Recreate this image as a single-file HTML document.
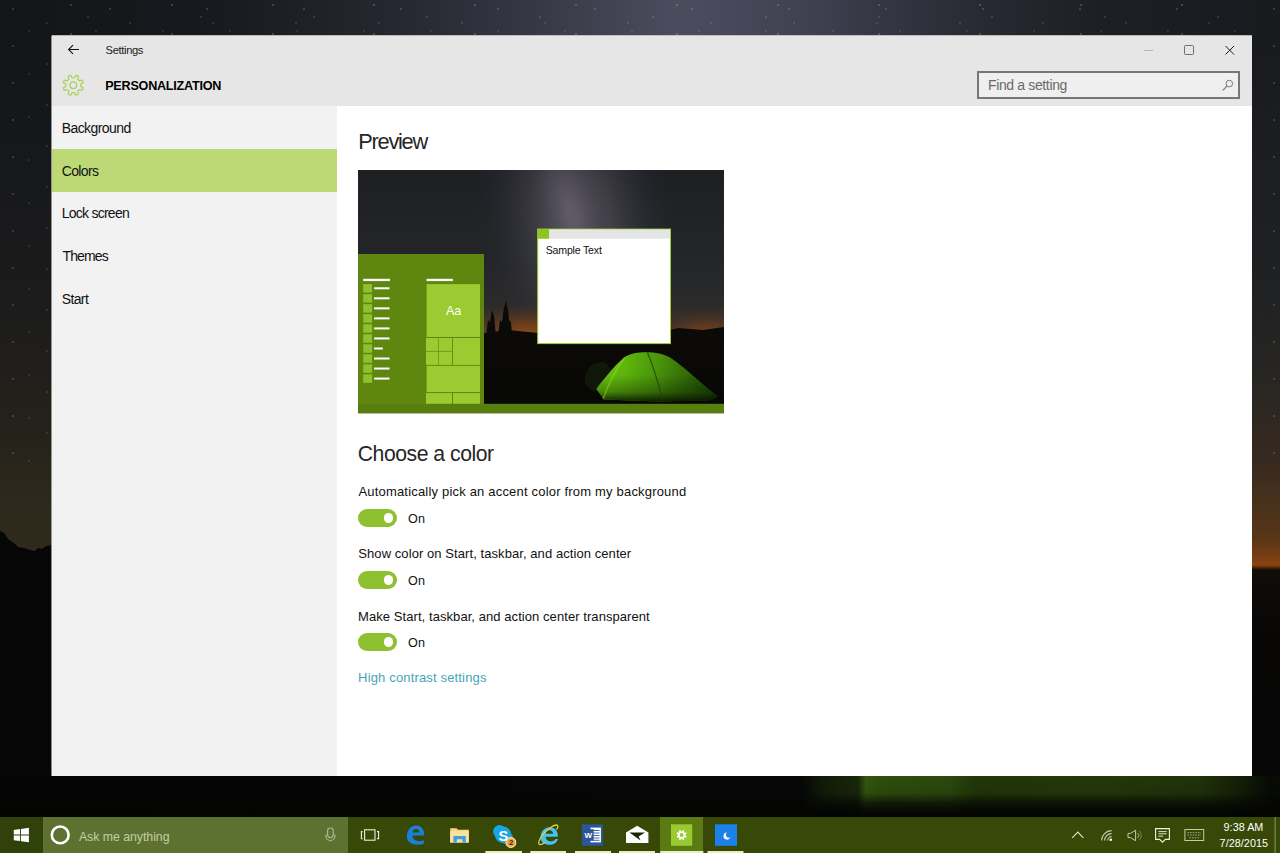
<!DOCTYPE html>
<html><head><meta charset="utf-8"><title>Settings</title>
<style>
*{box-sizing:border-box;margin:0;padding:0}
html,body{width:1280px;height:853px;overflow:hidden}
body{font-family:"Liberation Sans",sans-serif;background:#111214;position:relative;color:#000}
.a{position:absolute}
.t{position:absolute;line-height:1;white-space:nowrap}
svg{position:absolute;overflow:visible}
#desk{position:absolute;left:0;top:0;width:1280px;height:853px;
 background:linear-gradient(to right,#141518 0,#18191e 200px,#262730 400px,#3b3b49 560px,#4d4c5f 680px,#414152 800px,#2b2d37 950px,#1d1f25 1100px,#181a1e 1280px)}
#stars{position:absolute;left:0;top:0;width:1280px;height:470px;
 background:
  radial-gradient(1px 1px at 13px 9px,rgba(255,255,255,.5),rgba(255,255,255,0) 100%),
  radial-gradient(1px 1px at 47px 23px,rgba(255,255,255,.35),rgba(255,255,255,0) 100%),
  radial-gradient(1.2px 1.2px at 71px 5px,rgba(255,235,190,.45),rgba(255,255,255,0) 100%),
  radial-gradient(1px 1px at 29px 31px,rgba(255,255,255,.3),rgba(255,255,255,0) 100%),
  radial-gradient(1px 1px at 88px 17px,rgba(255,255,255,.4),rgba(255,255,255,0) 100%);
 background-size:97px 37px,83px 41px,101px 29px,67px 43px,113px 31px}
#lstrip{position:absolute;left:0;top:35px;width:52px;height:782px;background:linear-gradient(to bottom,#141518 0,#17181a 120px,#1b1b1c 260px,#25221b 400px,#2d291c 470px,#2f2a1b 520px)}
#rstrip{position:absolute;left:1252px;top:35px;width:28px;height:782px;background:linear-gradient(to bottom,#181a1e 0,#1b1d20 100px,#202123 260px,#282623 345px,#36291f 425px,#47311c 465px,#5a3616 505px,#793e12 522px,#8c4510 530px,#100c08 535px,#080706 600px,#060606 100%)}
#bstrip{position:absolute;left:0;top:776px;width:1280px;height:41px;background:
 linear-gradient(to bottom,rgba(4,5,3,0) 0,rgba(4,5,3,.1) 17px,rgba(4,5,3,.7) 27px,rgba(4,5,3,.95) 35px,rgba(4,5,3,1) 41px),
 linear-gradient(to right,#050505 0,#060606 800px,#121d08 825px,#18280a 858px,#35580f 866px,#2f4e0e 880px,#2c490d 950px,#223609 975px,#24390b 1100px,#203309 1200px,#141f07 1240px,#080a05 1270px)}
#win{position:absolute;left:52px;top:36px;width:1200px;height:740px;background:#fff;box-shadow:-1px 0 0 rgba(225,228,215,.5),0 -1px 0 rgba(235,238,225,.7),-1px -1px 0 rgba(120,125,110,.4)}
#hdr{position:absolute;left:0;top:0;width:1200px;height:70px;background:#e6e6e6}
#side{position:absolute;left:0;top:70px;width:285px;height:670px;background:#f2f2f2}
#sel{position:absolute;left:0;top:43px;width:285px;height:43px;background:#bcd976}
#search{position:absolute;left:925px;top:35px;width:263px;height:28px;border:2px solid #777;background:#efefef}
.tog{position:absolute;left:358px;width:39px;height:18px;border-radius:9px;background:#8ec02f}
.tog i{position:absolute;left:25.8px;top:4.4px;width:9.2px;height:9.2px;border-radius:4.6px;background:#fff}
#tb{position:absolute;left:0;top:817px;width:1280px;height:36px;background:#384806}
</style></head><body>
<div id="desk"></div><div id="lstrip"></div><div id="rstrip"></div><div id="stars"></div>
<svg style="left:0;top:500px" width="53" height="320" viewBox="0 500 53 320"><path d="M0 531L4 533L9 540L14 543L18 547L24 548L30 550L35 551L38 548L42 549L46 546L53 545V820H0Z" fill="#060606"/></svg>
<div id="bstrip"></div>
<div id="win">
 <div id="hdr"></div>
 <div id="side"><div id="sel"></div></div>
 <div id="search"></div>
</div>
<!-- title bar icons (page coords) -->
<svg style="left:0;top:0" width="1280" height="853" viewBox="0 0 1280 853" fill="none">
 <!-- back arrow -->
 <path d="M79 49.5H68.6M73 45.2L68.6 49.5L73 53.8" stroke="#111" stroke-width="1.1"/>
 <!-- minimize -->
 <path d="M1144 50.5H1153" stroke="#b5b5b5" stroke-width="1"/>
 <!-- maximize -->
 <rect x="1184.5" y="45.5" width="9" height="9" rx="1" stroke="#5a5a5a" stroke-width=".85"/>
 <!-- close -->
 <path d="M1225.5 46L1234 54.5M1234 46L1225.5 54.5" stroke="#111" stroke-width=".95"/>
 <!-- search icon -->
 <circle cx="1229.3" cy="83.6" r="3.3" stroke="#777" stroke-width="1"/>
 <path d="M1227 86L1222.8 90.3" stroke="#777" stroke-width="1.1"/>
 <!-- gear -->
 <g transform="translate(73.3 85.2)" stroke="#a8d150" stroke-width="1.15">
  <circle r="3.3"/>
  <path d="M7.49 1.31L9.98 2.56L8.87 5.24L6.22 4.37L4.37 6.22L5.24 8.87L2.56 9.98L1.31 7.49L-1.31 7.49L-2.56 9.98L-5.24 8.87L-4.37 6.22L-6.22 4.37L-8.87 5.24L-9.98 2.56L-7.49 1.31L-7.49 -1.31L-9.98 -2.56L-8.87 -5.24L-6.22 -4.37L-4.37 -6.22L-5.24 -8.87L-2.56 -9.98L-1.31 -7.49L1.31 -7.49L2.56 -9.98L5.24 -8.87L4.37 -6.22L6.22 -4.37L8.87 -5.24L9.98 -2.56L7.49 -1.31Z" stroke-linejoin="round"/>
 </g>
</svg>
<div class="tog" style="top:509px"><i></i></div>
<div class="tog" style="top:571px"><i></i></div>
<div class="tog" style="top:633px"><i></i></div>
<svg style="left:358px;top:170px" width="366" height="243.4" viewBox="0 0 366 243.4">
<defs>
<linearGradient id="psky" x1="0" y1="0" x2="0" y2="243.4" gradientUnits="userSpaceOnUse">
 <stop offset="0" stop-color="#1d1f23"/><stop offset="0.4" stop-color="#24262a"/><stop offset="0.55" stop-color="#2b2a2b"/><stop offset="0.64" stop-color="#3a3029"/><stop offset="0.672" stop-color="#43301f"/><stop offset="0.68" stop-color="#0b0a08"/><stop offset="1" stop-color="#070706"/>
</linearGradient>
<radialGradient id="pmw" cx="0.5" cy="0.5" r="0.5"><stop offset="0" stop-color="#6d6775" stop-opacity=".9"/><stop offset="0.35" stop-color="#5a5662" stop-opacity=".65"/><stop offset="0.7" stop-color="#403e48" stop-opacity=".3"/><stop offset="1" stop-color="#2a2a30" stop-opacity="0"/></radialGradient>
<radialGradient id="pgl" cx="0.5" cy="0.5" r="0.5"><stop offset="0" stop-color="#9a4f14" stop-opacity=".95"/><stop offset="0.4" stop-color="#7a411a" stop-opacity=".7"/><stop offset="1" stop-color="#3a2c22" stop-opacity="0"/></radialGradient>
<linearGradient id="ptent" x1="245" y1="195" x2="360" y2="222" gradientUnits="userSpaceOnUse"><stop offset="0" stop-color="#6cc40e"/><stop offset="0.22" stop-color="#5cb00c"/><stop offset="0.45" stop-color="#4a950a"/><stop offset="0.7" stop-color="#336d07"/><stop offset="1" stop-color="#1a3f04"/></linearGradient>
<linearGradient id="ptentf" x1="0" y1="182" x2="0" y2="232" gradientUnits="userSpaceOnUse"><stop offset="0.45" stop-color="#0a1a02" stop-opacity="0"/><stop offset="0.8" stop-color="#0a1a02" stop-opacity=".35"/><stop offset="1" stop-color="#050c02" stop-opacity=".9"/></linearGradient>
<clipPath id="pclip"><rect x="0" y="0" width="366" height="243.4"/></clipPath>
<clipPath id="phz"><rect x="0" y="0" width="366" height="165"/></clipPath>
</defs>
<g clip-path="url(#pclip)">
<rect width="366" height="243.4" fill="url(#psky)"/>
<g clip-path="url(#phz)"><ellipse cx="218" cy="50" rx="100" ry="175" fill="url(#pmw)" transform="rotate(-10 218 50)" opacity=".85"/></g>
<ellipse cx="210" cy="38" rx="40" ry="100" fill="url(#pmw)" transform="rotate(-12 210 38)" opacity=".55"/>
<g clip-path="url(#phz)"><ellipse cx="170" cy="166" rx="85" ry="34" fill="url(#pgl)"/><ellipse cx="350" cy="166" rx="70" ry="30" fill="url(#pgl)" opacity=".7"/></g>
<path d="M120 164L150 160L180 163L300 163L320 158L345 160L366 157L366 168L120 168Z" fill="#0b0a08"/>
<path d="M128 166L130 150L132 152L134 140L136 146L138 166Z M140 166L142 150L144 152L146 138L148 131L150 140L151 150L153 152L154 166Z" fill="#0a0a08"/>
<path d="M227 214C226 206 229 199 233 196C236 192 240 194 243 192C247 191 251 195 253 200L246 212L236 222Z" fill="#15240c" opacity=".55"/>
<path d="M238.3 219C246 209 256 196 266 187.5C272 183.5 280 182.3 288 182.3C297 182.3 306 184 312 187.5C322 194 332 203 340 210C348 217 355 222.5 360 226.5L352 230.5L300 231.5L246 229.5Z" fill="url(#ptent)"/>
<path d="M238.3 219C246 209 256 196 266 187.5C272 183.5 280 182.3 288 182.3C297 182.3 306 184 312 187.5C322 194 332 203 340 210C348 217 355 222.5 360 226.5L352 230.5L300 231.5L246 229.5Z" fill="url(#ptentf)"/>
<path d="M266.5 188C259 198 251 212 245 229" stroke="#9be02a" stroke-opacity=".45" stroke-width="1.6" fill="none"/>
<path d="M289.5 182.6C295 196 300 212 304.5 229" stroke="#20480a" stroke-opacity=".8" stroke-width="1.3" fill="none"/>
<rect x="0" y="84" width="126" height="150" fill="#5f860f"/>
<rect x="0" y="233.8" width="366" height="9.6" fill="#587e0e"/>
<rect x="5.2" y="108.8" width="26.8" height="2.3" fill="#fff"/>
<rect x="68.5" y="108.8" width="26.4" height="2.3" fill="#fff"/>
<rect x="5.2" y="114.10" width="8.9" height="8.5" fill="#8fc02f"/>
<rect x="16.1" y="117.30" width="15.4" height="2" fill="#fff"/>
<rect x="5.2" y="124.13" width="8.9" height="8.5" fill="#8fc02f"/>
<rect x="16.1" y="127.33" width="15.4" height="2" fill="#fff"/>
<rect x="5.2" y="134.16" width="8.9" height="8.5" fill="#8fc02f"/>
<rect x="16.1" y="137.36" width="15.4" height="2" fill="#fff"/>
<rect x="5.2" y="144.19" width="8.9" height="8.5" fill="#8fc02f"/>
<rect x="16.1" y="147.39" width="15.4" height="2" fill="#fff"/>
<rect x="5.2" y="154.22" width="8.9" height="8.5" fill="#8fc02f"/>
<rect x="16.1" y="157.42" width="15.4" height="2" fill="#fff"/>
<rect x="5.2" y="164.25" width="8.9" height="8.5" fill="#8fc02f"/>
<rect x="16.1" y="167.45" width="15.4" height="2" fill="#fff"/>
<rect x="5.2" y="174.28" width="8.9" height="8.5" fill="#8fc02f"/>
<rect x="16.1" y="177.48" width="8.7" height="2" fill="#fff"/>
<rect x="5.2" y="184.31" width="8.9" height="8.5" fill="#8fc02f"/>
<rect x="16.1" y="187.51" width="15.4" height="2" fill="#fff"/>
<rect x="5.2" y="194.34" width="8.9" height="8.5" fill="#8fc02f"/>
<rect x="16.1" y="197.54" width="15.4" height="2" fill="#fff"/>
<rect x="5.2" y="204.37" width="8.9" height="8.5" fill="#8fc02f"/>
<rect x="16.1" y="207.57" width="15.4" height="2" fill="#fff"/>
<rect x="68.6" y="114.1" width="53.4" height="52.9" fill="#9acb30"/>
<rect x="68" y="168" width="12.4" height="12.9" fill="#9acb30"/>
<rect x="81" y="168" width="13" height="12.9" fill="#9acb30"/>
<rect x="68" y="181.6" width="12.4" height="13.3" fill="#9acb30"/>
<rect x="81" y="181.6" width="13" height="13.3" fill="#9acb30"/>
<rect x="94.9" y="168" width="27.1" height="26.9" fill="#9acb30"/>
<rect x="68.6" y="195.8" width="53.4" height="26.3" fill="#9acb30"/>
<rect x="68" y="223.1" width="26" height="10.7" fill="#9acb30"/>
<rect x="95" y="223.1" width="27" height="10.7" fill="#9acb30"/>
<rect x="179.7" y="59.1" width="132.8" height="114.5" fill="#fff" stroke="#9acd32" stroke-width="1"/>
<rect x="180.2" y="59.6" width="131.8" height="9.1" fill="#e5e5e5"/>
<rect x="179.4" y="58.8" width="11.6" height="9.9" fill="#8fc320"/>
</g></svg>
<div id="tb"></div>
<div class="a" style="left:0;top:817px;width:43px;height:36px;background:#31410a"></div>
<div class="a" style="left:43px;top:817px;width:305.3px;height:36px;background:#5d7230"></div>
<div class="a" style="left:660.3px;top:817px;width:43.1px;height:36px;background:#5b7a12"></div>
<svg style="left:0;top:0" width="1280" height="853" viewBox="0 0 1280 853" fill="none">
<path d="M13.8 829.9L20 829V834.6H13.8Z M20.9 828.9L28.9 827.8V834.6H20.9Z M13.8 835.5H20V841.1L13.8 840.2Z M20.9 835.5H28.9V842.3L20.9 841.2Z" fill="#fff"/>
<circle cx="60.2" cy="834.9" r="8.4" stroke="#fff" stroke-width="2.6"/>
<g stroke="#aab892" stroke-width="1.2"><rect x="327.6" y="828" width="5.6" height="9.6" rx="2.8"/><path d="M325.9 834.5V836a4.5 4.5 0 0 0 9 0V834.5M330.4 840.5V841.6"/></g>
<g stroke="#e9eddc" stroke-width="1.1"><rect x="364.6" y="829.8" width="10.4" height="10.4"/><path d="M362.6 831.6H361.4V838.6H362.6M377 831.6H378.6V838.6H377"/></g>
<path d="M407 837.6C406.5 829.6 411.5 825.6 416.2 825.6C421.8 825.6 424.4 830 424.2 835.6H412.4C412.6 839.4 416 841.2 419.2 841.2C421 841.2 422.6 840.8 423.8 840V843.4C422.2 844.4 420 844.8 417.8 844.8C411.6 844.8 407.4 842 407 837.6ZM412.5 832.4H419.4C419.4 830.4 418.2 828.9 416 828.9C414 828.9 412.8 830.4 412.5 832.4Z" fill="#1b7fd8"/>
<path d="M407 837.6C406.6 833 408.6 830.2 411.4 828.4C409.6 830.4 409 833 409.6 835.6Z" fill="#1b7fd8"/>
<path d="M450.2 828.2H456.6L458 829.8H468.8V842.6H450.2Z" fill="#f4d982"/>
<path d="M450.2 831.2H468.8V842.6H450.2Z" fill="#f7e39c"/>
<path d="M453.4 836H465.8V842.6H462.4V839.2H456.8V842.6H453.4Z" fill="#3d9fe0"/>
<g><circle cx="499.5" cy="831.5" r="6.4" fill="#18a6e4"/><circle cx="506.6" cy="838" r="6.2" fill="#18a6e4"/><circle cx="503" cy="834.8" r="8.2" fill="#18a6e4"/></g>
<circle cx="510.9" cy="842.5" r="4.9" fill="#f2a43a" stroke="#f6e2b4" stroke-width="1.1"/>
<path d="M540.6 838.2C540.2 831.4 544.6 827.2 549.6 827.2C555 827.2 558.2 831.2 557.8 836.8H545.6C545.8 839.8 548 841.4 550.8 841.4C552.8 841.4 554.6 840.6 555.6 839H558C556.8 842.8 553.8 844.8 550 844.8C544.8 844.8 540.9 842.4 540.6 838.2ZM545.7 833.8H553.2C553 831.6 551.6 830.2 549.5 830.2C547.4 830.2 546 831.6 545.7 833.8Z" fill="#45c3ec"/>
<path d="M556.6 829.6C558.4 826.8 558.2 825 556.4 825C553.6 825 546 830 541.4 836.6C538.4 841 537.8 844.6 540 844.6C541.4 844.6 543.2 843.6 545 842.2" stroke="#e8c64a" stroke-width="1.3"/>
<rect x="581.9" y="824.3" width="21" height="21.5" fill="#2b579a"/>
<rect x="590.5" y="827.6" width="10.4" height="14.8" fill="#fff"/>
<path d="M592.5 830.5H599.5M592.5 833H599.5M592.5 835.5H599.5M592.5 838H599.5M592.5 840.3H599.5" stroke="#2b579a" stroke-width=".9"/>
<rect x="583.8" y="829.2" width="9.8" height="11.6" fill="#2b579a"/>
<path d="M626 832.4L637.2 825.8L648.4 832.4V843H626Z" fill="#fff"/>
<path d="M629.4 832.6H645L638.6 836.4L640.6 840.6L629.4 832.6Z" fill="#1c2405"/>
<rect x="671" y="824.3" width="21.2" height="21.5" fill="#99ca30"/>
<g transform="translate(681.6 835)"><path d="M3.65 0.58L5.07 1.17L4.41 2.75L2.99 2.17L2.17 2.99L2.75 4.41L1.17 5.07L0.58 3.65L-0.58 3.65L-1.17 5.07L-2.75 4.41L-2.17 2.99L-2.99 2.17L-4.41 2.75L-5.07 1.17L-3.65 0.58L-3.65 -0.58L-5.07 -1.17L-4.41 -2.75L-2.99 -2.17L-2.17 -2.99L-2.75 -4.41L-1.17 -5.07L-0.58 -3.65L0.58 -3.65L1.17 -5.07L2.75 -4.41L2.17 -2.99L2.99 -2.17L4.41 -2.75L5.07 -1.17L3.65 -0.58Z" fill="#fff" fill-rule="evenodd"/><circle r="2" fill="#99ca30"/></g>
<rect x="715" y="824.3" width="22" height="21.5" fill="#1b80ea"/>
<path d="M727.2 832.6A3.5 3.5 0 1 0 730.3 837.2A2.2 2.2 0 0 1 727.2 832.6Z" fill="#fff"/>
<rect x="485.4" y="851" width="36.6" height="2" fill="#e7f0ba"/>
<rect x="530.3" y="851" width="35.7" height="2" fill="#e7f0ba"/>
<rect x="575" y="851" width="36.0" height="2" fill="#e7f0ba"/>
<rect x="619" y="851" width="36.0" height="2" fill="#e7f0ba"/>
<rect x="660.3" y="851" width="43.1" height="2" fill="#e7f0ba"/>
<rect x="707.5" y="851" width="36.0" height="2" fill="#e7f0ba"/>
<path d="M1072.2 837.8L1077.8 832.2L1083.4 837.8" stroke="#dde3c8" stroke-width="1.2"/>
<g stroke="#c9d2ae" stroke-width="1.1"><path d="M1101.6 840.6A10 10 0 0 1 1111.6 830.6"/><path d="M1104.6 840.6A7 7 0 0 1 1111.6 833.6"/><path d="M1107.6 840.6A4 4 0 0 1 1111.6 836.6"/></g><circle cx="1110.8" cy="839.8" r="1.3" fill="#fff"/>
<g stroke="#c3cca8" stroke-width="1"><path d="M1128 833.4H1130.6L1135.6 830.2V840.8L1130.6 837.6H1128Z"/><path d="M1137.6 833A3.6 3.6 0 0 1 1137.6 838" opacity=".8"/><path d="M1139.4 831A6.4 6.4 0 0 1 1139.4 840" opacity=".45"/></g>
<g stroke="#eef2de" stroke-width="1.1"><path d="M1155.6 828.6H1169.4V839.4H1165.4L1162.5 842.2L1159.6 839.4H1155.6Z"/><path d="M1158.4 831.6H1166.6M1158.4 833.8H1166.6M1158.4 836.2H1163.2" stroke-width=".9"/></g>
<g stroke="#c3cca8" stroke-width="1"><rect x="1184.9" y="829.5" width="18.8" height="11"/><path d="M1187.6 832.6H1201M1187.6 835H1201M1189.6 837.8H1199" stroke-dasharray="1.4 1.2" opacity=".8"/></g>
<rect x="1274.6" y="817" width="1" height="36" fill="#8b9a62"/>
</svg>

<div id="texts">
<div class="t" style="left:105.6px;top:44.70px;font-size:11.2px;font-weight:400;color:#1a1a1a;letter-spacing:-0.367px;">Settings</div>
<div class="t" style="left:105.2px;top:80.00px;font-size:12.6px;font-weight:700;color:#000;letter-spacing:-0.228px;">PERSONALIZATION</div>
<div class="t" style="left:61.7px;top:121.30px;font-size:14px;font-weight:400;color:#111;letter-spacing:-0.572px;">Background</div>
<div class="t" style="left:61.7px;top:164.30px;font-size:14px;font-weight:400;color:#111;letter-spacing:-0.611px;">Colors</div>
<div class="t" style="left:61.7px;top:206.30px;font-size:14px;font-weight:400;color:#111;letter-spacing:-0.744px;">Lock screen</div>
<div class="t" style="left:62.5px;top:249.30px;font-size:14px;font-weight:400;color:#111;letter-spacing:-0.863px;">Themes</div>
<div class="t" style="left:61.7px;top:292.30px;font-size:14px;font-weight:400;color:#111;letter-spacing:-0.616px;">Start</div>
<div class="t" style="left:988.0px;top:78.30px;font-size:14px;font-weight:400;color:#6a6a6a;letter-spacing:-0.362px;">Find a setting</div>
<div class="t" style="left:358.3px;top:130.90px;font-size:21.8px;font-weight:400;color:#262626;letter-spacing:-1.276px;">Preview</div>
<div class="t" style="left:357.8px;top:443.20px;font-size:21.2px;font-weight:400;color:#262626;letter-spacing:-0.480px;">Choose a color</div>
<div class="t" style="left:358.4px;top:485.30px;font-size:13px;font-weight:400;color:#111;letter-spacing:0.190px;">Automatically pick an accent color from my background</div>
<div class="t" style="left:358.3px;top:547.30px;font-size:13px;font-weight:400;color:#111;letter-spacing:0.073px;">Show color on Start, taskbar, and action center</div>
<div class="t" style="left:358.1px;top:610.30px;font-size:13px;font-weight:400;color:#111;letter-spacing:0.067px;">Make Start, taskbar, and action center transparent</div>
<div class="t" style="left:408.1px;top:513.00px;font-size:12.6px;font-weight:400;color:#111;letter-spacing:0.094px;">On</div>
<div class="t" style="left:408.1px;top:575.00px;font-size:12.6px;font-weight:400;color:#111;letter-spacing:0.094px;">On</div>
<div class="t" style="left:408.1px;top:637.00px;font-size:12.6px;font-weight:400;color:#111;letter-spacing:0.094px;">On</div>
<div class="t" style="left:358.1px;top:671.30px;font-size:13px;font-weight:400;color:#44a5b9;letter-spacing:0.158px;">High contrast settings</div>
<div class="t" style="left:545.7px;top:245.00px;font-size:10.6px;font-weight:400;color:#111;letter-spacing:-0.192px;">Sample Text</div>
<div class="t" style="left:446.1px;top:305.00px;font-size:12.6px;font-weight:400;color:#fff;letter-spacing:-0.203px;">Aa</div>
<div class="t" style="left:78.9px;top:831.15px;font-size:12.3px;font-weight:400;color:#c3cea6;letter-spacing:-0.020px;">Ask me anything</div>
<div class="t" style="left:498.6px;top:829.05px;font-size:14.5px;font-weight:700;color:#fff;letter-spacing:-0.072px;">S</div>
<div class="t" style="left:508.9px;top:838.90px;font-size:7.8px;font-weight:700;color:#3a2a08;letter-spacing:-0.144px;">2</div>
<div class="t" style="left:584.6px;top:831.80px;font-size:8px;font-weight:700;color:#fff;letter-spacing:0.037px;">W</div>
<div class="t" style="left:1223.6px;top:821.90px;font-size:10.8px;font-weight:400;color:#fff;letter-spacing:0.025px;">9:38 AM</div>
<div class="t" style="left:1219.6px;top:837.90px;font-size:10.8px;font-weight:400;color:#fff;letter-spacing:0.050px;">7/28/2015</div>
</div>
</body></html>
